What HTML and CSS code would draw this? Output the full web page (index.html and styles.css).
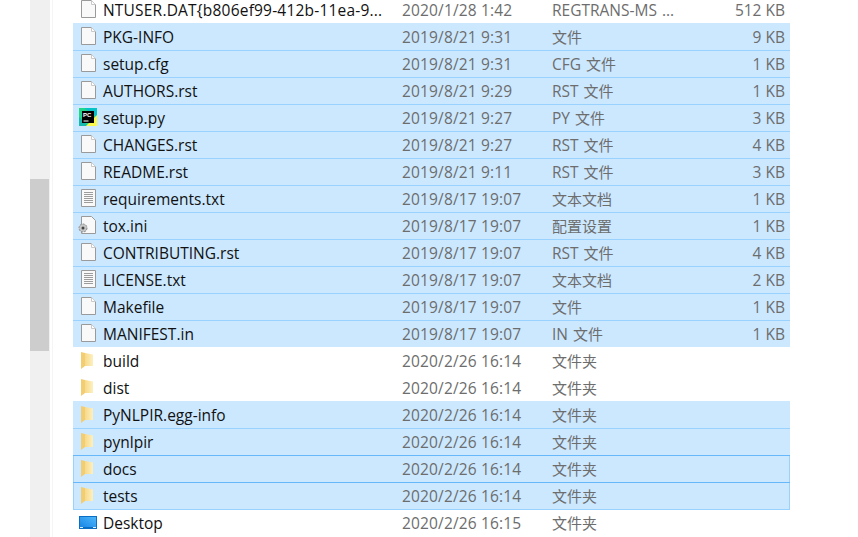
FILE: index.html
```html
<!DOCTYPE html>
<html lang="zh">
<head>
<meta charset="utf-8">
<title>Files</title>
<link rel="stylesheet" href="styles.css">
</head>
<body>
<svg class="defs" width="0" height="0">
  <defs>
    <linearGradient id="fg" x1="0" x2="1" y1="0" y2="0"><stop offset="0" stop-color="#f8d98a"/><stop offset="1" stop-color="#fdf0c0"/></linearGradient>
    <linearGradient id="dg" x1="0" x2="1" y1="1" y2="0"><stop offset="0" stop-color="#1b87e6"/><stop offset="1" stop-color="#4cb6fb"/></linearGradient>
    <symbol id="file" viewBox="0 0 15 18"><path d="M.5.5H10.500L14.500 4.500v13H.5z" fill="#f9f9f9" stroke="#9a9a9a"/><path d="M10.500 .5V4.500h4" fill="#fff" stroke="#c9c9c9"/></symbol>
    <symbol id="text" viewBox="0 0 15 18"><path d="M.5.5H14.500v17H.5z" fill="#f9f9f9" stroke="#9a9a9a"/><path d="M3 3.500h9M3 5.500h9M3 7.500h9M3 9.500h9M3 11.500h9M3 13.500h9" stroke="#9c9c9c"/></symbol>
    <symbol id="ini" viewBox="0 0 18 19"><path d="M3.500.5H13.500L17.500 4.500v13H3.500z" fill="#f9f9f9" stroke="#9a9a9a"/><circle cx="5" cy="12" r="4" fill="#c6c6c6" stroke="#8d8d8d" stroke-dasharray="2 1"/><circle cx="5" cy="12" r="1.500" fill="#444"/></symbol>
    <symbol id="folder" viewBox="0 0 15 18"><path d="M4 2L12 3.500V15H4z" fill="url(#fg)"/><path d="M0 1L4 2V15L0 18z" fill="#f3cd72"/></symbol>
  </defs>
</svg>
<div class="scrollbar"><div class="thumb"></div></div>
<main class="list">
  <div class="row"><svg class="icon"><use href="#file"/></svg><span class="name long">NTUSER.DAT{b806ef99-412b-11ea-9...</span><span class="date">2020/1/28 1:42</span><span class="type"><span class="ext">REGTRANS-MS ...</span></span><span class="size">512 KB</span></div>
  <div class="row sel"><svg class="icon"><use href="#file"/></svg><span class="name">PKG-INFO</span><span class="date">2019/8/21 9:31</span><span class="type">文件</span><span class="size">9 KB</span></div>
  <div class="row sel"><svg class="icon"><use href="#file"/></svg><span class="name">setup.cfg</span><span class="date">2019/8/21 9:31</span><span class="type"><span class="ext">CFG</span> 文件</span><span class="size">1 KB</span></div>
  <div class="row sel"><svg class="icon"><use href="#file"/></svg><span class="name">AUTHORS.rst</span><span class="date">2019/8/21 9:29</span><span class="type"><span class="ext">RST</span> 文件</span><span class="size">1 KB</span></div>
  <div class="row sel"><svg class="icon pycharm" viewBox="0 0 18 18"><path d="M0 0h18v18H0z" fill="#21d789"/><path d="M5 0h13v9z" fill="#07c3c8"/><path d="M0 9v9h9z" fill="#18b8b0"/><path d="M18 7v11H7z" fill="#fcf84a"/><path d="M3 3h12v12H3z" fill="#000"/><path d="M4.500 12.500h5v1h-5z" fill="#fff"/><text x="4" y="9" class="pc">PC</text></svg><span class="name">setup.py</span><span class="date">2019/8/21 9:27</span><span class="type"><span class="ext">PY</span> 文件</span><span class="size">3 KB</span></div>
  <div class="row sel"><svg class="icon"><use href="#file"/></svg><span class="name">CHANGES.rst</span><span class="date">2019/8/21 9:27</span><span class="type"><span class="ext">RST</span> 文件</span><span class="size">4 KB</span></div>
  <div class="row sel"><svg class="icon"><use href="#file"/></svg><span class="name">README.rst</span><span class="date">2019/8/21 9:11</span><span class="type"><span class="ext">RST</span> 文件</span><span class="size">3 KB</span></div>
  <div class="row sel"><svg class="icon"><use href="#text"/></svg><span class="name">requirements.txt</span><span class="date">2019/8/17 19:07</span><span class="type">文本文档</span><span class="size">1 KB</span></div>
  <div class="row sel"><svg class="icon gear"><use href="#ini"/></svg><span class="name">tox.ini</span><span class="date">2019/8/17 19:07</span><span class="type">配置设置</span><span class="size">1 KB</span></div>
  <div class="row sel"><svg class="icon"><use href="#file"/></svg><span class="name">CONTRIBUTING.rst</span><span class="date">2019/8/17 19:07</span><span class="type"><span class="ext">RST</span> 文件</span><span class="size">4 KB</span></div>
  <div class="row sel"><svg class="icon"><use href="#text"/></svg><span class="name">LICENSE.txt</span><span class="date">2019/8/17 19:07</span><span class="type">文本文档</span><span class="size">2 KB</span></div>
  <div class="row sel"><svg class="icon"><use href="#file"/></svg><span class="name">Makefile</span><span class="date">2019/8/17 19:07</span><span class="type">文件</span><span class="size">1 KB</span></div>
  <div class="row sel"><svg class="icon"><use href="#file"/></svg><span class="name">MANIFEST.in</span><span class="date">2019/8/17 19:07</span><span class="type"><span class="ext">IN</span> 文件</span><span class="size">1 KB</span></div>
  <div class="row"><svg class="icon"><use href="#folder"/></svg><span class="name">build</span><span class="date">2020/2/26 16:14</span><span class="type">文件夹</span><span class="size"></span></div>
  <div class="row"><svg class="icon"><use href="#folder"/></svg><span class="name">dist</span><span class="date">2020/2/26 16:14</span><span class="type">文件夹</span><span class="size"></span></div>
  <div class="row sel"><svg class="icon"><use href="#folder"/></svg><span class="name">PyNLPIR.egg-info</span><span class="date">2020/2/26 16:14</span><span class="type">文件夹</span><span class="size"></span></div>
  <div class="row sel"><svg class="icon"><use href="#folder"/></svg><span class="name">pynlpir</span><span class="date">2020/2/26 16:14</span><span class="type">文件夹</span><span class="size"></span></div>
  <div class="row sel framed"><svg class="icon"><use href="#folder"/></svg><span class="name">docs</span><span class="date">2020/2/26 16:14</span><span class="type">文件夹</span><span class="size"></span></div>
  <div class="row sel framed"><svg class="icon"><use href="#folder"/></svg><span class="name">tests</span><span class="date">2020/2/26 16:14</span><span class="type">文件夹</span><span class="size"></span></div>
  <div class="row"><svg class="icon desk" viewBox="0 0 18 13"><path d="M0 0h18v13H0z" fill="#0a6fc4"/><path d="M1 1h16v10H1z" fill="url(#dg)"/><path d="M1 11.500h3M14 11.500h3" stroke="#d8effc"/></svg><span class="name">Desktop</span><span class="date">2020/2/26 16:15</span><span class="type">文件夹</span><span class="size"></span></div>
</main>
</body>
</html>
```

FILE: styles.css
```css
html, body {
  margin: 0;
  height: 100%;
  overflow: hidden;
  background: #fff;
}
body {
  display: flex;
  padding-left: 30px;
  box-sizing: border-box;
  font-family: "Open Sans", "Noto Sans CJK SC", sans-serif;
  font-size: 15px;
}
.defs { position: absolute; }
.scrollbar {
  width: 20px;
  flex: none;
  padding-top: 179px;
  background: #f0f0f0;
  box-sizing: border-box;
}
.thumb {
  width: 19px;
  height: 172px;
  background: #cdcdcd;
}
.list {
  width: 738px;
  flex: none;
  margin-left: 2px;
  padding: 0 0 0 20px;
  border-left: 1px solid #f5f5f5;
  box-sizing: border-box;
  overflow: hidden;
}
.row {
  display: grid;
  grid-template-columns: 30px 299px 150px 1fr 80px;
  align-items: center;
  height: 27px;
  color: #6d6d6d;
}
.row:first-child { margin-top: -4px; }
.sel { background: #cce8ff; }
.sel + .sel { box-shadow: inset 0 1px 0 #99d1ff; }
.framed + .framed,
.sel + .framed {
  box-shadow: inset 0 1px 0 #66b8fb, inset 1px 0 0 #99d1ff, inset -1px 0 0 #99d1ff;
}
.framed + .row:not(.sel) { box-shadow: inset 0 1px 0 #99d1ff; }
.icon {
  width: 15px;
  height: 18px;
  margin: 4px 0 0 8px;
  align-self: start;
}
.gear { width: 18px; height: 19px; margin-left: 5px; }
.desk { width: 18px; height: 13px; margin: 7px 0 0 6px; }
.pycharm { width: 18px; margin-left: 6px; }
.pc {
  font-family: "Liberation Sans", sans-serif;
  font-size: 6px;
  font-weight: 700;
  fill: #fff;
}
.name {
  color: #111;
  white-space: nowrap;
  font-size: 15.5px;
  padding-top: 1px;
}
.long { letter-spacing: .2px; }
.date { font-size: 15.5px; letter-spacing: .15px; padding-top: 1px; }
.type { white-space: nowrap; word-spacing: 1px; }
.ext { font-size: 15.5px; }
.size { text-align: right; padding-right: 5px; font-size: 15.5px; padding-top: 1px; }
```
